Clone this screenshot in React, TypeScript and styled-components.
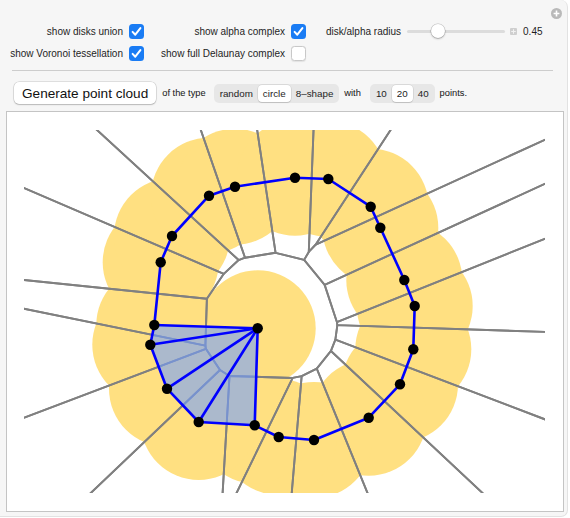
import React from "react";
import styled, { createGlobalStyle } from "styled-components";

const GlobalStyle = createGlobalStyle`
  html, body { margin: 0; padding: 0; background: #ffffff; }
  body { font-family: "Liberation Sans", Arial, sans-serif; }
`;

type Pt = [number, number];

const CENTER: Pt = [257.7, 328.3];
const RING: Pt[] = [
  [154.3, 325],
  [160.7, 262.3],
  [172, 236],
  [209, 195.7],
  [235, 186.7],
  [295, 177.7],
  [328.3, 179],
  [370.7, 206.7],
  [380.3, 227.7],
  [404.3, 280],
  [414.7, 306],
  [413.3, 349.3],
  [400, 384.3],
  [368.7, 417.7],
  [314, 440],
  [278.7, 437],
  [254.7, 425.3],
  [198.7, 422],
  [167, 388.7],
  [150.3, 344.7],
];
const FAN: Pt[] = [
  [154.3, 325],
  [150.3, 344.7],
  [167, 388.7],
  [198.7, 422],
  [254.7, 425.3],
];
const POINTS: Pt[] = [CENTER, ...RING];
const RADIUS = 58;
const CLIP = { x: 24, y: 130, w: 521, h: 363 };

function clipHalf(poly: Pt[], a: Pt, b: Pt): Pt[] {
  const nx = b[0] - a[0];
  const ny = b[1] - a[1];
  const mx = (a[0] + b[0]) / 2;
  const my = (a[1] + b[1]) / 2;
  const f = (p: Pt) => (p[0] - mx) * nx + (p[1] - my) * ny;
  const out: Pt[] = [];
  for (let i = 0; i < poly.length; i++) {
    const p = poly[i];
    const q = poly[(i + 1) % poly.length];
    const fp = f(p);
    const fq = f(q);
    if (fp <= 0) out.push(p);
    if ((fp < 0 && fq > 0) || (fp > 0 && fq < 0)) {
      const t = fp / (fp - fq);
      out.push([p[0] + t * (q[0] - p[0]), p[1] + t * (q[1] - p[1])]);
    }
  }
  return out;
}

function voronoiCells(pts: Pt[]): Pt[][] {
  return pts.map((p, i) => {
    let poly: Pt[] = [
      [-3000, -3000],
      [4000, -3000],
      [4000, 4000],
      [-3000, 4000],
    ];
    pts.forEach((q, j) => {
      if (j !== i) poly = clipHalf(poly, p, q);
    });
    return poly;
  });
}

const toPath = (poly: Pt[], close = true) =>
  poly.map((p, i) => `${i ? "L" : "M"}${p[0].toFixed(2)} ${p[1].toFixed(2)}`).join(" ") +
  (close ? " Z" : "");

const Panel = styled.div`
  position: relative;
  box-sizing: border-box;
  width: 568px;
  height: 517px;
  background: #f6f6f6;
  border-right: 1px solid #e2e2e2;
  border-bottom: 1px solid #e2e2e2;
  border-top-right-radius: 7px;
  border-bottom-right-radius: 7px;
  display: flex;
  flex-direction: column;
`;

const CornerButton = styled.div`
  position: absolute;
  top: 8px;
  right: 5px;
  width: 11px;
  height: 11px;
  border-radius: 50%;
  background: #b9b9b9;
  display: flex;
  align-items: center;
  justify-content: center;
`;

const ControlsGrid = styled.div`
  display: grid;
  grid-template-columns: 132px 142px 1fr;
  grid-auto-rows: 15px;
  column-gap: 20px;
  row-gap: 7px;
  padding: 24px 0 0 12px;
`;

const Cell = styled.div<{ $align?: "start" | "end" }>`
  display: flex;
  align-items: center;
  justify-content: ${(p) => (p.$align === "start" ? "flex-start" : "flex-end")};
  gap: 6px;
  white-space: nowrap;
`;

const Label = styled.span`
  font-size: 10px;
  color: #1e1e1e;
  white-space: nowrap;
`;

const CheckBoxBox = styled.div<{ $checked: boolean }>`
  box-sizing: border-box;
  width: 15px;
  height: 15px;
  border-radius: 3.5px;
  flex: none;
  background: ${(p) => (p.$checked ? "#1a7cf4" : "#ffffff")};
  border: ${(p) => (p.$checked ? "none" : "1px solid #c8c8c8")};
  box-shadow: ${(p) => (p.$checked ? "none" : "0 0.5px 1px rgba(0,0,0,0.08)")};
  display: flex;
  align-items: center;
  justify-content: center;
`;

const CheckBox = ({ checked }: { checked: boolean }) => (
  <CheckBoxBox $checked={checked}>
    {checked && (
      <svg width="15" height="15" viewBox="0 0 15 15">
        <path
          d="M3.6 7.9 L6.3 10.7 L11.4 4.1"
          fill="none"
          stroke="#ffffff"
          strokeWidth="2"
          strokeLinecap="round"
          strokeLinejoin="round"
        />
      </svg>
    )}
  </CheckBoxBox>
);

const SliderTrack = styled.div`
  position: relative;
  width: 98px;
  height: 3px;
  border-radius: 2px;
  background: #dcdcdc;
  margin-left: 6px;
`;

const SliderThumb = styled.div`
  position: absolute;
  left: 24px;
  top: -6px;
  width: 14px;
  height: 14px;
  border-radius: 50%;
  background: #ffffff;
  box-shadow: 0 0 0 0.5px rgba(0, 0, 0, 0.22), 0 1px 2px rgba(0, 0, 0, 0.25);
`;

const PlusBox = styled.div`
  width: 7px;
  height: 7px;
  margin-left: 5px;
  background: #cfcfcf;
  border-radius: 1px;
  display: flex;
  align-items: center;
  justify-content: center;
`;

const ValueText = styled.span`
  font-size: 10px;
  color: #1e1e1e;
  margin-left: 6px;
`;

const SliderGroup = styled.div`
  display: flex;
  align-items: center;
`;

const Separator = styled.div`
  height: 1px;
  background: #cdcdcd;
  margin: 9px 14px 0 12px;
`;

const ActionRow = styled.div`
  display: flex;
  align-items: center;
  height: 22px;
  margin-top: 11px;
  padding-left: 14px;
`;

const GenerateButton = styled.button`
  height: 22px;
  padding: 0 8px;
  border: none;
  border-radius: 5px;
  background: #ffffff;
  box-shadow: 0 0 0 0.5px rgba(0, 0, 0, 0.18), 0 1px 1.5px rgba(0, 0, 0, 0.18);
  font-family: "Liberation Sans", Arial, sans-serif;
  font-size: 13.6px;
  color: #111;
  white-space: nowrap;
`;

const SmallText = styled.span<{ $ml: number }>`
  font-size: 9.3px;
  color: #222;
  margin-left: ${(p) => p.$ml}px;
  white-space: nowrap;
  -webkit-text-stroke: 0.05px #222;
`;

const Segmented = styled.div<{ $ml: number }>`
  display: flex;
  align-items: center;
  height: 19px;
  box-sizing: border-box;
  padding: 1px;
  border-radius: 5px;
  background: #e7e7e7;
  margin-left: ${(p) => p.$ml}px;
`;

const SegItem = styled.div<{ $selected?: boolean }>`
  height: 17px;
  display: flex;
  align-items: center;
  padding: 0 5px;
  border-radius: 4px;
  font-size: 9.8px;
  color: #1e1e1e;
  white-space: nowrap;
  background: ${(p) => (p.$selected ? "#ffffff" : "transparent")};
  box-shadow: ${(p) => (p.$selected ? "0 0 0 0.5px rgba(0,0,0,0.12), 0 1px 1px rgba(0,0,0,0.12)" : "none")};
`;

const PlotFrame = styled.div`
  box-sizing: border-box;
  width: 558px;
  height: 401px;
  margin: 7px 0 0 6px;
  border: 1px solid #c4c4c4;
  background: #ffffff;
`;

const PlotSvg = styled.svg`
  display: block;
`;

const Plot = () => {
  const cells = voronoiCells(POINTS);
  return (
    <PlotSvg width="556" height="399" viewBox="7 112 556 399">
      <defs>
        <clipPath id="plotClip">
          <rect x={CLIP.x} y={CLIP.y} width={CLIP.w} height={CLIP.h} />
        </clipPath>
      </defs>
      <g clipPath="url(#plotClip)">
        {POINTS.map((p, i) => (
          <circle key={`d${i}`} cx={p[0]} cy={p[1]} r={RADIUS} fill="#ffe081" />
        ))}
        {cells.map((c, i) => (
          <path
            key={`v${i}`}
            d={toPath(c)}
            fill="none"
            stroke="#808080"
            strokeWidth="1.9"
            strokeLinejoin="round"
          />
        ))}
        <path d={toPath([CENTER, ...FAN])} fill="rgba(115,159,255,0.6)" stroke="none" />
        <path
          d={toPath(RING)}
          fill="none"
          stroke="#0000ff"
          strokeWidth="2.6"
          strokeLinejoin="round"
        />
        {FAN.map((p, i) => (
          <line
            key={`s${i}`}
            x1={CENTER[0]}
            y1={CENTER[1]}
            x2={p[0]}
            y2={p[1]}
            stroke="#0000ff"
            strokeWidth="2.6"
            strokeLinecap="round"
          />
        ))}
        {POINTS.map((p, i) => (
          <circle key={`p${i}`} cx={p[0]} cy={p[1]} r={5.2} fill="#000000" />
        ))}
      </g>
    </PlotSvg>
  );
};

export default function App() {
  return (
    <>
      <GlobalStyle />
      <Panel>
        <CornerButton>
          <svg width="11" height="11" viewBox="0 0 11 11">
            <path d="M5.5 2.6 V8.4 M2.6 5.5 H8.4" stroke="#ffffff" strokeWidth="1.6" />
          </svg>
        </CornerButton>
        <ControlsGrid>
          <Cell>
            <Label>show disks union</Label>
            <CheckBox checked />
          </Cell>
          <Cell>
            <Label>show alpha complex</Label>
            <CheckBox checked />
          </Cell>
          <Cell $align="start">
            <SliderGroup>
              <Label>disk/alpha radius</Label>
              <SliderTrack>
                <SliderThumb />
              </SliderTrack>
              <PlusBox>
                <svg width="7" height="7" viewBox="0 0 7 7">
                  <path d="M3.5 1.2 V5.8 M1.2 3.5 H5.8" stroke="#f2f2f2" strokeWidth="1" />
                </svg>
              </PlusBox>
              <ValueText>0.45</ValueText>
            </SliderGroup>
          </Cell>
          <Cell>
            <Label>show Voronoi tessellation</Label>
            <CheckBox checked />
          </Cell>
          <Cell>
            <Label>show full Delaunay complex</Label>
            <CheckBox checked={false} />
          </Cell>
          <Cell $align="start" />
        </ControlsGrid>
        <Separator />
        <ActionRow>
          <GenerateButton>Generate point cloud</GenerateButton>
          <SmallText $ml={6}>of the type</SmallText>
          <Segmented $ml={8}>
            <SegItem>random</SegItem>
            <SegItem $selected>circle</SegItem>
            <SegItem>8–shape</SegItem>
          </Segmented>
          <SmallText $ml={5}>with</SmallText>
          <Segmented $ml={9}>
            <SegItem>10</SegItem>
            <SegItem $selected>20</SegItem>
            <SegItem>40</SegItem>
          </Segmented>
          <SmallText $ml={5}>points.</SmallText>
        </ActionRow>
        <PlotFrame>
          <Plot />
        </PlotFrame>
      </Panel>
    </>
  );
}
